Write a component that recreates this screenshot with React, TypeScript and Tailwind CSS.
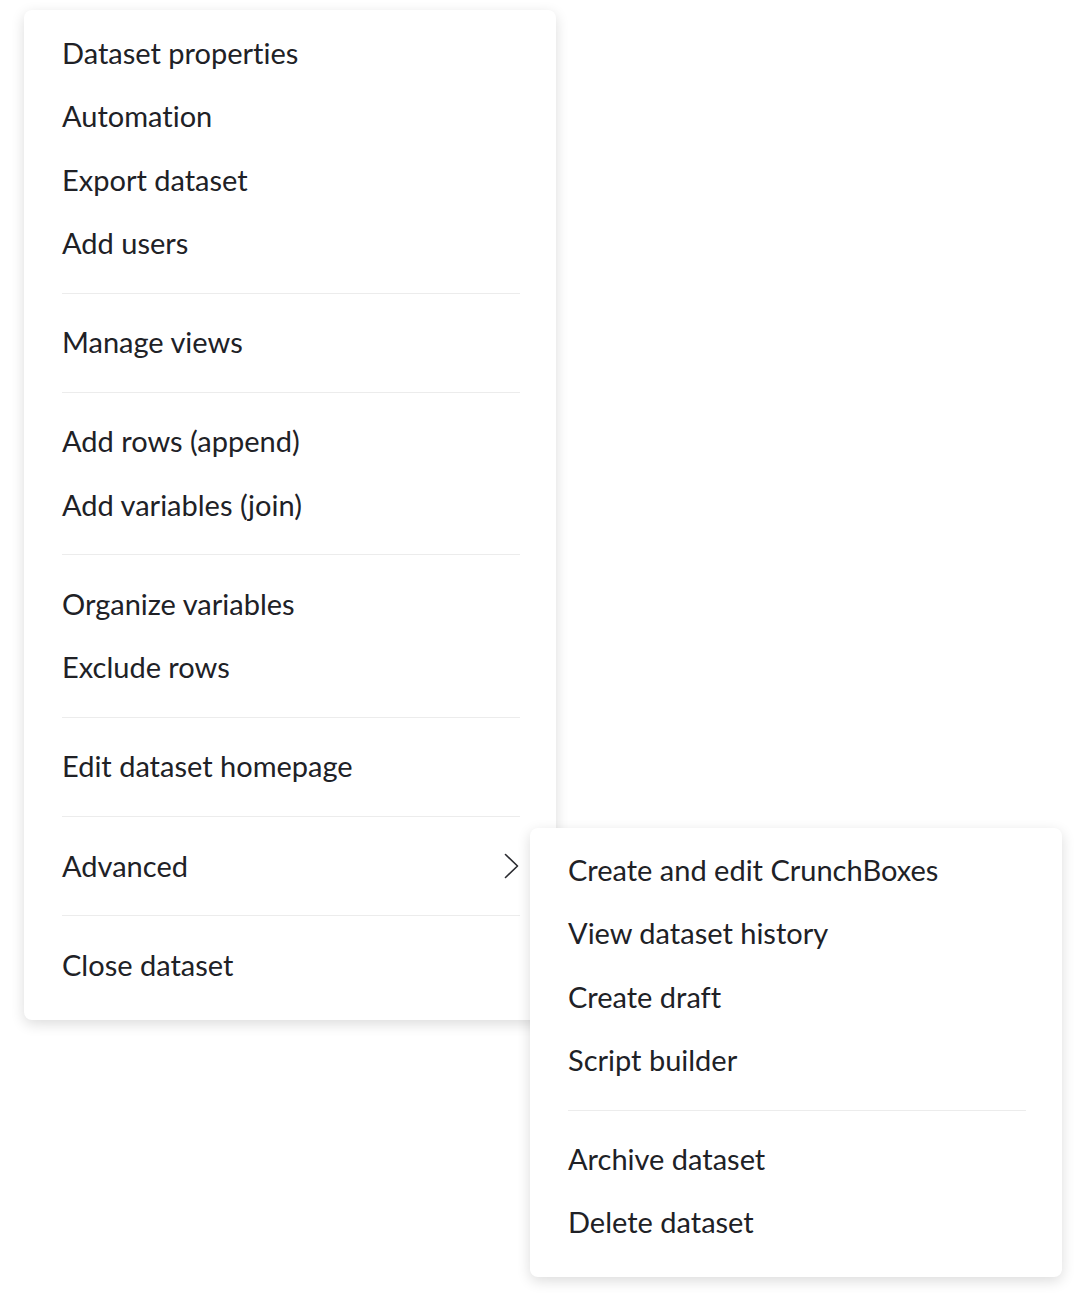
import React from 'react';

type Section = string[];

const mainSections: Section[] = [
  ['Dataset properties', 'Automation', 'Export dataset', 'Add users'],
  ['Manage views'],
  ['Add rows (append)', 'Add variables (join)'],
  ['Organize variables', 'Exclude rows'],
  ['Edit dataset homepage'],
  ['Advanced'],
  ['Close dataset'],
];

const advancedSections: Section[] = [
  ['Create and edit CrunchBoxes', 'View dataset history', 'Create draft', 'Script builder'],
  ['Archive dataset', 'Delete dataset'],
];

const Chevron = () => (
  <svg width="18" height="26" viewBox="0 0 18 26" fill="none" className="shrink-0">
    <path d="M3.5 1.5 L15.5 13 L3.5 24.5" stroke="#2a2b30" strokeWidth="1.6" strokeLinecap="round" strokeLinejoin="round" />
  </svg>
);

const MenuList = ({ sections, className }: { sections: Section[]; className: string }) => (
  <div className={className}>
    {sections.map((section, i) => (
      <div key={i}>
        {i > 0 && (
          <div className="h-[36px] flex items-center">
            <div className="h-px w-full bg-[#ececec]" />
          </div>
        )}
        {section.map((label) => (
          <div key={label} className="h-[63.25px] flex items-center justify-between">
            <span className="-mt-[2px]">{label}</span>
            {label === 'Advanced' && <Chevron />}
          </div>
        ))}
      </div>
    ))}
  </div>
);

const App = () => {
  return (
    <div className="relative min-h-[1300px] bg-white font-['Lato',sans-serif] text-[29px] leading-none [font-variant-ligatures:none] text-[#202126]">
      <div className="pt-[10px] pl-[24px]">
        <div className="w-[532px] bg-white rounded-[8px] shadow-[0_4px_14px_rgba(0,0,0,0.14)]">
          <MenuList sections={mainSections} className="pt-[12px] pb-[23px] pl-[38px] pr-[36px]" />
        </div>
      </div>

      {/* Advanced submenu */}
      <div className="absolute left-[530px] top-[828px] w-[532px] bg-white rounded-[8px] shadow-[0_4px_14px_rgba(0,0,0,0.14)]">
        <MenuList sections={advancedSections} className="pt-[11px] pb-[22.5px] pl-[38px] pr-[36px]" />
      </div>
    </div>
  );
};

export default App;
